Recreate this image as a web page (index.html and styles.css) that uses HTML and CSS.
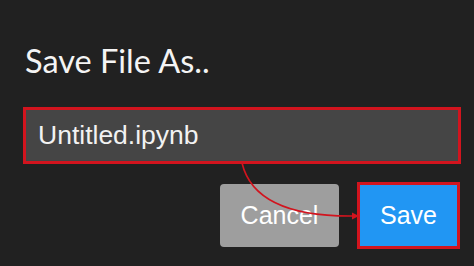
FILE: index.html
```html
<!DOCTYPE html>
<html>
<head>
<meta charset="utf-8">
<link rel="stylesheet" href="styles.css">
</head>
<body>
<div class="dialog">
  <h1 class="title">Save File As..</h1>
  <div class="field"><span class="field-text">Untitled.ipynb</span></div>
  <div class="actions">
    <button class="btn btn-cancel">Cancel</button>
    <button class="btn btn-save">Save</button>
  </div>
  <svg class="arrow" width="474" height="266" viewBox="0 0 474 266">
    <path d="M242,163 Q255,217 353,216" fill="none" stroke="#d2141e" stroke-width="1.6"/>
    <path d="M352,212.5 L359,216 L352,219.5 Z" fill="#d2141e"/>
  </svg>
</div>
</body>
</html>
```

FILE: styles.css
```css
html, body {
  margin: 0;
  padding: 0;
  background: #212121;
}
.dialog {
  position: relative;
  width: 474px;
  height: 266px;
  box-sizing: border-box;
  padding: 41px 13px 0 23px;
  overflow: hidden;
}
.title {
  margin: 0 0 0 2px;
  font-family: Lato, "Open Sans", sans-serif;
  font-weight: 400;
  font-size: 32.5px;
  line-height: 40px;
  color: #f4f4f4;
}
.field {
  margin-top: 26px;
  width: 438px;
  height: 57px;
  box-sizing: border-box;
  border: 3px solid #d2141e;
  background: #454545;
  display: flex;
  align-items: center;
  padding-left: 12px;
}
.field-text {
  font-family: "Liberation Sans", Arial, sans-serif;
  font-size: 26.5px;
  color: #f2f2f2;
}
.actions {
  margin-top: 18px;
  display: flex;
  justify-content: flex-end;
  align-items: center;
  gap: 18px;
  padding-right: 1px;
}
.btn {
  font-family: "Liberation Sans", Arial, sans-serif;
  font-size: 25px;
  color: #ffffff;
  border: none;
  padding: 0;
  box-sizing: border-box;
  display: flex;
  align-items: center;
  justify-content: center;
}
.btn-cancel {
  width: 119px;
  height: 63px;
  background: #9e9e9e;
  border-radius: 4px;
}
.btn-save {
  width: 103px;
  height: 67px;
  background: #2196f3;
  border: 3px solid #d2141e;
}
.arrow {
  position: absolute;
  left: 0;
  top: 0;
  pointer-events: none;
}
```
